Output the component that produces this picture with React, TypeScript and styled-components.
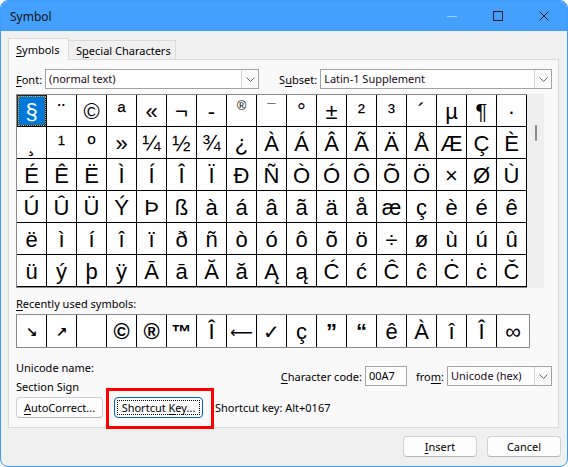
import React from 'react';
import styled, { createGlobalStyle } from 'styled-components';

const GlobalStyle = createGlobalStyle`
  html, body {
    margin: 0;
    padding: 0;
    background: #fff;
  }
  body {
    font-family: "Noto Sans", "Liberation Sans", sans-serif;
    font-size: 11px;
    color: #000;
  }
  * {
    box-sizing: border-box;
  }
`;

const symbolRows = [
  ['§', '¨', '©', 'ª', '«', '¬', '-', '®', '¯', '°', '±', '²', '³', '´', 'µ', '¶', '·'],
  Array.from('¸¹º»¼½¾¿ÀÁÂÃÄÅÆÇÈ'),
  Array.from('ÉÊËÌÍÎÏÐÑÒÓÔÕÖ×ØÙ'),
  Array.from('ÚÛÜÝÞßàáâãäåæçèéê'),
  Array.from('ëìíîïðñòóôõö÷øùúû'),
  Array.from('üýþÿĀāĂăĄąĆćĈĉĊċČ'),
];

// a few glyphs are drawn small and raised in the dialog's font
const smallGlyphs: Record<string, { size: number; lift: number }> = {
  '®': { size: 13, lift: 11 },
  '¯': { size: 15, lift: 5 },
};

interface RecentItem {
  ch: string;
  size?: number;
  bold?: boolean;
  font?: string;
}

const recent: RecentItem[] = [
  { ch: '↘', size: 14, bold: true, font: '"DejaVu Sans"' },
  { ch: '↗', size: 14, bold: true, font: '"DejaVu Sans"' },
  { ch: '' },
  { ch: '©', bold: true },
  { ch: '®', bold: true },
  { ch: '™', size: 20, bold: true },
  { ch: 'Î' },
  { ch: '⟵', size: 16, font: '"DejaVu Sans"' },
  { ch: '✓', size: 20, font: '"DejaVu Sans"' },
  { ch: 'ç' },
  { ch: '”', bold: true },
  { ch: '“', bold: true },
  { ch: 'ê' },
  { ch: 'À' },
  { ch: 'î' },
  { ch: 'Î' },
  { ch: '∞' },
];

const Chevron = () => (
  <svg width="9" height="5" viewBox="0 0 9 5">
    <polyline points="0.5,0.5 4.5,4.5 8.5,0.5" fill="none" stroke="#606060" strokeWidth="1" />
  </svg>
);

const App: React.FC = () => {
  return (
    <>
      <GlobalStyle />
      <Window>
        <TitleBar>
          <Title>Symbol</Title>
          <WinButton>
            <MinLine />
          </WinButton>
          <WinButton>
            <MaxBox />
          </WinButton>
          <WinButton>
            <svg width="10" height="10" viewBox="0 0 10 10">
              <path d="M0.5 0.5 L9.5 9.5 M9.5 0.5 L0.5 9.5" stroke="#1a1a1a" strokeWidth="1" />
            </svg>
          </WinButton>
        </TitleBar>

        <Body>
          <TabStrip>
            <Tab $active $width={61}>
              <span>
                <Key>S</Key>ymbols
              </span>
            </Tab>
            <Tab $width={108}>
              <span>
                S<Key>p</Key>ecial Characters
              </span>
            </Tab>
          </TabStrip>

          <Panel>
            <TopRow>
              <Label>
                <Key>F</Key>ont:
              </Label>
              <Select $width={214}>
                <SelectText>(normal text)</SelectText>
                <ArrowBox>
                  <Chevron />
                </ArrowBox>
              </Select>
              <Label $gap={20}>
                S<Key>u</Key>bset:
              </Label>
              <Select>
                <SelectText>Latin-1 Supplement</SelectText>
                <ArrowBox>
                  <Chevron />
                </ArrowBox>
              </Select>
            </TopRow>

            <GridArea>
              <CharGrid>
                {symbolRows.map((row, r) =>
                  row.map((ch, c) => {
                    const small = smallGlyphs[ch];
                    return (
                      <Cell
                        key={`${r}-${c}`}
                        $selected={r === 0 && c === 0}
                        $size={small?.size}
                        $lift={small?.lift}
                      >
                        {ch}
                      </Cell>
                    );
                  })
                )}
              </CharGrid>
              <ScrollTrack>
                <Thumb />
              </ScrollTrack>
            </GridArea>

            <RecentLabel>
              <Key>R</Key>ecently used symbols:
            </RecentLabel>
            <RecentRow>
              {recent.map((item, i) => (
                <RecentCell
                  key={i}
                  $size={item.size}
                  $bold={item.bold}
                  $font={item.font}
                  $last={i === recent.length - 1}
                >
                  {item.ch}
                </RecentCell>
              ))}
            </RecentRow>

            <InfoRow>
              <NameBlock>
                <div>Unicode name:</div>
                <div>Section Sign</div>
              </NameBlock>
              <CodeGroup>
                <Label>
                  <Key>C</Key>haracter code:
                </Label>
                <CodeInput>00A7</CodeInput>
                <Label $gap={9}>
                  fro<Key>m</Key>:
                </Label>
                <Select $width={105}>
                  <SelectText>Unicode (hex)</SelectText>
                  <ArrowBox>
                    <Chevron />
                  </ArrowBox>
                </Select>
              </CodeGroup>
            </InfoRow>

            <ButtonRow>
              <Button $width={87}>
                <span>
                  <Key>A</Key>utoCorrect...
                </span>
              </Button>
              <Highlight>
                <Button $width={89} $focused>
                  <FocusRing>
                    <span>
                      Shortcut <Key>K</Key>ey...
                    </span>
                  </FocusRing>
                </Button>
              </Highlight>
              <ShortcutInfo>Shortcut key: Alt+0167</ShortcutInfo>
            </ButtonRow>
          </Panel>

          <Footer>
            <Button $width={74}>
              <span>
                <Key>I</Key>nsert
              </span>
            </Button>
            <Button $width={74}>
              <span>Cancel</span>
            </Button>
          </Footer>
        </Body>
      </Window>
    </>
  );
};

export default App;

const Window = styled.div`
  width: 568px;
  height: 467px;
  border: 1px solid #3d9bfc;
  border-radius: 8px;
  overflow: hidden;
  background: #f0f0f0;
  display: flex;
  flex-direction: column;
`;

const TitleBar = styled.div`
  height: 30px;
  flex-shrink: 0;
  background: #43a0fd;
  display: flex;
  align-items: center;
`;

const Title = styled.div`
  flex: 1;
  padding-left: 9px;
  font-size: 12px;
  color: #111;
`;

const WinButton = styled.div`
  width: 46px;
  height: 30px;
  display: flex;
  align-items: center;
  justify-content: center;
`;

const MinLine = styled.div`
  width: 10px;
  height: 1px;
  background: #9ccaff;
`;

const MaxBox = styled.div`
  width: 10px;
  height: 10px;
  border: 1px solid #1a1a1a;
`;

const Body = styled.div`
  flex: 1;
  display: flex;
  flex-direction: column;
  padding: 7px 0 0 7px;
`;

const TabStrip = styled.div`
  display: flex;
  align-items: flex-end;
  height: 22px;
  margin-bottom: -1px;
  position: relative;
  z-index: 1;
`;

const Tab = styled.div<{ $active?: boolean; $width: number }>`
  width: ${(p) => p.$width}px;
  height: ${(p) => (p.$active ? 22 : 20)}px;
  margin-left: ${(p) => (p.$active ? 0 : -1)}px;
  padding-left: 7px;
  display: flex;
  align-items: center;
  border: 1px solid #d9d9d9;
  border-bottom: ${(p) => (p.$active ? 'none' : '1px solid #d9d9d9')};
  background: ${(p) => (p.$active ? '#f9f9f9' : '#f0f0f0')};
`;

const Key = styled.span`
  text-decoration: underline;
  text-underline-offset: 2px;
`;

const Panel = styled.div`
  width: 551px;
  height: 369px;
  border: 1px solid #d9d9d9;
  background: #f9f9f9;
  padding: 9px 6px 0 7px;
  display: flex;
  flex-direction: column;
`;

const TopRow = styled.div`
  display: flex;
  align-items: center;
  height: 20px;
`;

const Label = styled.span<{ $gap?: number }>`
  margin-left: ${(p) => p.$gap || 0}px;
  margin-right: 3px;
  white-space: nowrap;
`;

const Select = styled.div<{ $width?: number }>`
  display: flex;
  align-items: stretch;
  height: 20px;
  width: ${(p) => (p.$width ? `${p.$width}px` : 'auto')};
  flex: ${(p) => (p.$width ? 'none' : 1)};
  border: 1px solid #a3a3a3;
  background: #fff;
`;

const SelectText = styled.span`
  flex: 1;
  padding-left: 3px;
  line-height: 18px;
  color: #1a0a20;
  white-space: nowrap;
`;

const ArrowBox = styled.div`
  width: 17px;
  border-left: 1px solid #d4d4d4;
  background: #fbfbfb;
  display: flex;
  align-items: center;
  justify-content: center;
`;

const GridArea = styled.div`
  display: flex;
  margin-top: 5px;
  height: 194px;
`;

const CharGrid = styled.div`
  display: grid;
  grid-template-columns: repeat(17, 30px);
  grid-auto-rows: 32px;
  border-top: 1px solid #8a8a8a;
  border-left: 1px solid #8a8a8a;
  border-bottom: 1px solid #8a8a8a;
  background: #fff;
`;

const Cell = styled.div<{ $selected?: boolean; $size?: number; $lift?: number }>`
  display: flex;
  align-items: center;
  justify-content: center;
  padding-top: ${(p) => (p.$lift ? 0 : 3)}px;
  padding-bottom: ${(p) => p.$lift || 0}px;
  border-right: 1px solid #000;
  border-bottom: 1px solid #000;
  font-family: "Liberation Sans", Arial, sans-serif;
  font-size: ${(p) => p.$size || 22}px;
  color: ${(p) => (p.$selected ? '#fff' : '#000')};
  background: ${(p) => (p.$selected ? '#0078d7' : '#fff')};
  outline: ${(p) => (p.$selected ? '1px dotted #f0a030' : 'none')};
  outline-offset: -2px;
  box-shadow: ${(p) => (p.$selected ? 'inset 0 0 0 1px #222' : 'none')};
`;

const ScrollTrack = styled.div`
  width: 17px;
  background: #efefef;
  display: flex;
  justify-content: center;
  padding-top: 31px;
`;

const Thumb = styled.div`
  width: 2px;
  height: 16px;
  background: #8a8a8a;
  border-radius: 1px;
`;

const RecentLabel = styled.div`
  margin-top: 9px;
  line-height: 14px;
`;

const RecentRow = styled.div`
  display: grid;
  grid-template-columns: repeat(16, 30px) 32px;
  height: 34px;
  width: 514px;
  margin-top: 3px;
  border: 1px solid #8a8a8a;
  background: #fff;
`;

const RecentCell = styled.div<{ $size?: number; $bold?: boolean; $font?: string; $last?: boolean }>`
  display: flex;
  align-items: center;
  justify-content: center;
  padding-top: 2px;
  border-right: ${(p) => (p.$last ? 'none' : '1px solid #000')};
  font-family: ${(p) => p.$font || '"Liberation Sans", Arial'}, sans-serif;
  font-size: ${(p) => p.$size || 22}px;
  font-weight: ${(p) => (p.$bold ? 700 : 400)};
`;

const InfoRow = styled.div`
  display: flex;
  align-items: flex-start;
  height: 38px;
  margin-top: 10px;
`;

const NameBlock = styled.div`
  line-height: 19px;
`;

const CodeGroup = styled.div`
  display: flex;
  align-items: center;
  margin-left: auto;
  margin-top: 8px;
`;

const CodeInput = styled.div`
  width: 42px;
  height: 20px;
  border: 1px solid #a3a3a3;
  background: #fff;
  padding-left: 3px;
  line-height: 18px;
`;

const ButtonRow = styled.div`
  display: flex;
  align-items: center;
  margin-top: 1px;
  height: 21px;
`;

const Button = styled.div<{ $width: number; $focused?: boolean }>`
  width: ${(p) => p.$width}px;
  height: 21px;
  display: flex;
  align-items: center;
  justify-content: center;
  padding: ${(p) => (p.$focused ? '2px' : '0')};
  background: #fdfdfd;
  border: 1px solid ${(p) => (p.$focused ? '#0067c0' : '#d0d0d0')};
  border-bottom-color: ${(p) => (p.$focused ? '#0067c0' : '#b9b9b9')};
  border-radius: 4px;
  white-space: nowrap;
`;

const FocusRing = styled.div`
  width: 100%;
  height: 100%;
  display: flex;
  align-items: center;
  justify-content: center;
  border: 1px dotted #000;
`;

const Highlight = styled.div`
  position: relative;
  margin-left: 11px;

  &::after {
    content: '';
    position: absolute;
    top: -9px;
    left: -8px;
    right: -11px;
    bottom: -11px;
    border: 3px solid #ff0000;
    pointer-events: none;
  }
`;

const ShortcutInfo = styled.span`
  margin-left: 12px;
  white-space: nowrap;
`;

const Footer = styled.div`
  display: flex;
  justify-content: flex-end;
  gap: 10px;
  width: 553px;
  margin-top: 8px;
`;
